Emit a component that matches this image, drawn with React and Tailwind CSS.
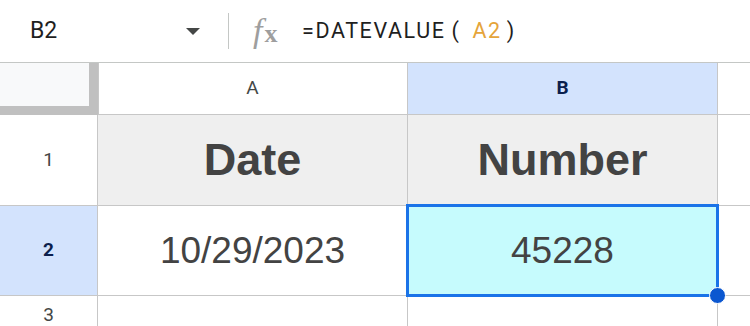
import React from 'react'

const line = 'border-[#c7c7c7]'

const RowHead = ({ n, active, h }) => (
  <div
    className={`flex items-center justify-center border-r border-b ${line} ${h} ${
      active ? 'bg-[#d3e3fd] text-[#0b1f4d] font-bold' : 'bg-white text-[#444746]'
    } text-[19px]`}
  >
    {n}
  </div>
)

const App = () => {
  return (
    <div className="w-[750px] h-[326px] overflow-hidden bg-white font-['Roboto',sans-serif]">
      {/* formula bar */}
      <div className="flex items-center h-[63px] border-b border-[#c4c7c5]">
        <div className="w-[178px] pl-[30px] text-[23px] text-[#1f1f1f]">B2</div>
        <div className="w-[50px] flex justify-start pl-[8px]">
          <svg width="14" height="7" viewBox="0 0 14 7">
            <path d="M0 0h14L7 7z" fill="#444746" />
          </svg>
        </div>
        <div className="w-px h-[36px] bg-[#c4c7c5]" />
        <div className="w-[73px] flex items-baseline pl-[24px] text-[#9e9e9e] font-['Liberation_Serif',serif] leading-none">
          <span className="italic text-[34px] pr-[2px]">f</span>
          <span className="font-bold text-[26px]">x</span>
        </div>
        <div className="text-[21.5px] tracking-[1.6px] text-[#1f1f1f] font-['Roboto',sans-serif] whitespace-nowrap">
          =DATEVALUE<span className="ml-[6px] mr-[12px]">(</span>
          <span className="text-[#e5a43a]">A2</span>
          <span className="ml-[5px]">)</span>
        </div>
      </div>

      {/* grid */}
      <div className="grid grid-cols-[98px_310px_310px_1fr]">
        {/* header row */}
        <div className="h-[52px] bg-[#f8f9fa] border-r-[9px] border-b-[9px] border-[#c0c0c0] relative">
          <div className="absolute right-[-10px] top-0 bottom-[-9px] w-px bg-[#c7c7c7]" />
        </div>
        <div className={`h-[52px] flex items-center justify-center border-r border-b ${line} text-[19px] text-[#444746]`}>A</div>
        <div className={`h-[52px] flex items-center justify-center border-r border-b ${line} bg-[#d3e3fd] text-[19px] font-bold text-[#0b1f4d]`}>B</div>
        <div className={`h-[52px] border-b ${line}`} />

        {/* row 1 */}
        <RowHead n="1" h="h-[91px]" />
        <div className={`h-[91px] flex items-center justify-center border-r border-b ${line} bg-[#efefef] font-['Liberation_Sans',Arial,sans-serif] font-bold text-[45px] text-[#434343]`}>Date</div>
        <div className={`h-[91px] flex items-center justify-center border-r border-b ${line} bg-[#efefef] font-['Liberation_Sans',Arial,sans-serif] font-bold text-[45px] text-[#434343]`}>Number</div>
        <div className={`h-[91px] border-b ${line}`} />

        {/* row 2 */}
        <RowHead n="2" active h="h-[90px]" />
        <div className={`h-[90px] flex items-center justify-center border-r border-b ${line} font-['Liberation_Sans',Arial,sans-serif] text-[37px] text-[#434343]`}>10/29/2023</div>
        <div className={`relative h-[90px] flex items-center justify-center border-r border-b ${line} bg-[#c6fbfd] font-['Liberation_Sans',Arial,sans-serif] text-[37px] text-[#434343]`}>
          <div className="absolute left-[-2px] top-[-2px] right-[-2px] bottom-[-2px] border-[3px] border-[#1a73e8]" />
          <div className="absolute right-[-9px] bottom-[-9px] w-[17px] h-[17px] rounded-full bg-[#0b57d0] border border-white" />
          <span className="relative">45228</span>
        </div>
        <div className={`h-[90px] border-b ${line}`} />

        {/* row 3 */}
        <RowHead n="3" h="h-[40px]" />
        <div className={`h-[40px] border-r ${line}`} />
        <div className={`h-[40px] border-r ${line}`} />
        <div className="h-[40px]" />
      </div>
    </div>
  )
}

export default App
